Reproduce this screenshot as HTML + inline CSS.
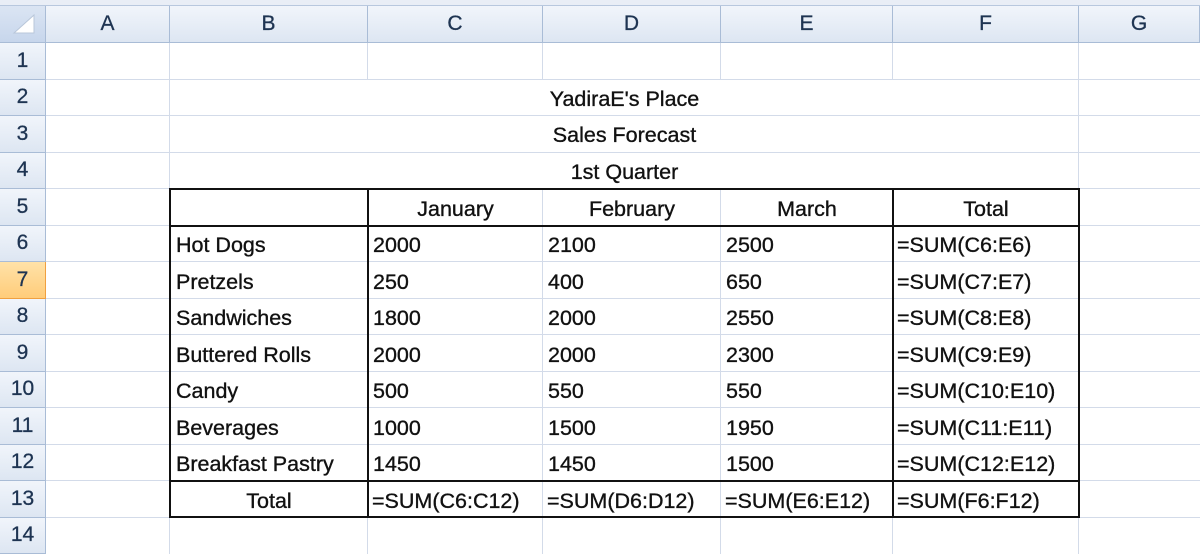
<!DOCTYPE html>
<html><head><meta charset="utf-8"><style>
*{margin:0;padding:0;box-sizing:border-box}
body{width:1200px;height:554px;overflow:hidden;background:#fff;position:relative;font-family:"Liberation Sans",sans-serif;color:#111}
.hd{position:absolute;background:linear-gradient(#f1f5fb,#dde6f2);border-right:1px solid #a9bcd6;border-bottom:1px solid #a9bcd6;color:#1e3452;font-size:21px;display:flex;align-items:center;justify-content:center;-webkit-text-stroke:0.3px #1e3452}
.gv{position:absolute;width:1px;background:#d3dbe9}
.gh{position:absolute;height:1px;background:#d3dbe9}
.bv{position:absolute;width:2px;background:#111}
.bh{position:absolute;height:2px;background:#111}
.t{position:absolute;font-size:21.5px;height:36px;line-height:38px;white-space:nowrap;-webkit-text-stroke:0.35px #111}
.c{text-align:center}
</style></head><body>
<div style="position:absolute;left:0;top:0;width:1200px;height:6px;background:#e9eef6;border-bottom:1px solid #b8c8de"></div>
<div class="hd" style="left:0;top:6px;width:46px;height:37px;background:linear-gradient(#dbe5f3,#c7d6ec)"><svg width="30" height="26"><polygon points="26,4 26,22 6,22" fill="#fff" stroke="#b9c7da"/></svg></div>
<div class="hd" style="left:46px;top:6px;width:124px;height:37px">A</div>
<div class="hd" style="left:170px;top:6px;width:198px;height:37px">B</div>
<div class="hd" style="left:368px;top:6px;width:175px;height:37px">C</div>
<div class="hd" style="left:543px;top:6px;width:178px;height:37px">D</div>
<div class="hd" style="left:721px;top:6px;width:172px;height:37px">E</div>
<div class="hd" style="left:893px;top:6px;width:186px;height:37px">F</div>
<div class="hd" style="left:1079px;top:6px;width:121px;height:37px">G</div>
<div class="hd" style="left:0;top:43px;width:46px;height:36.5px">1</div>
<div class="hd" style="left:0;top:79.5px;width:46px;height:36.5px">2</div>
<div class="hd" style="left:0;top:116px;width:46px;height:36.5px">3</div>
<div class="hd" style="left:0;top:152.5px;width:46px;height:36.5px">4</div>
<div class="hd" style="left:0;top:189px;width:46px;height:36.5px">5</div>
<div class="hd" style="left:0;top:225.5px;width:46px;height:36.5px">6</div>
<div class="hd" style="left:0;top:262px;width:46px;height:36.5px;background:linear-gradient(#ffe2a8,#ffcc7a);border-color:#f0a040">7</div>
<div class="hd" style="left:0;top:298.5px;width:46px;height:36.5px">8</div>
<div class="hd" style="left:0;top:335px;width:46px;height:36.5px">9</div>
<div class="hd" style="left:0;top:371.5px;width:46px;height:36.5px">10</div>
<div class="hd" style="left:0;top:408px;width:46px;height:36.5px">11</div>
<div class="hd" style="left:0;top:444.5px;width:46px;height:36.5px">12</div>
<div class="hd" style="left:0;top:481px;width:46px;height:36.5px">13</div>
<div class="hd" style="left:0;top:517.5px;width:46px;height:36.5px">14</div>
<div class="gh" style="left:46px;width:1154px;top:79px"></div>
<div class="gh" style="left:46px;width:1154px;top:115px"></div>
<div class="gh" style="left:46px;width:1154px;top:152px"></div>
<div class="gh" style="left:46px;width:1154px;top:188px"></div>
<div class="gh" style="left:46px;width:1154px;top:225px"></div>
<div class="gh" style="left:46px;width:1154px;top:261px"></div>
<div class="gh" style="left:46px;width:1154px;top:298px"></div>
<div class="gh" style="left:46px;width:1154px;top:334px"></div>
<div class="gh" style="left:46px;width:1154px;top:371px"></div>
<div class="gh" style="left:46px;width:1154px;top:407px"></div>
<div class="gh" style="left:46px;width:1154px;top:444px"></div>
<div class="gh" style="left:46px;width:1154px;top:480px"></div>
<div class="gh" style="left:46px;width:1154px;top:517px"></div>
<div class="gv" style="left:169px;top:43px;height:511px"></div>
<div class="gv" style="left:1078px;top:43px;height:511px"></div>
<div class="gv" style="left:367px;top:43px;height:36px"></div>
<div class="gv" style="left:542px;top:43px;height:36px"></div>
<div class="gv" style="left:720px;top:43px;height:36px"></div>
<div class="gv" style="left:892px;top:43px;height:36px"></div>
<div class="gv" style="left:367px;top:189px;height:365px"></div>
<div class="gv" style="left:542px;top:189px;height:365px"></div>
<div class="gv" style="left:720px;top:189px;height:365px"></div>
<div class="gv" style="left:892px;top:189px;height:365px"></div>
<div class="bh" style="left:170px;width:910px;top:188px"></div>
<div class="bh" style="left:170px;width:910px;top:225px"></div>
<div class="bh" style="left:170px;width:910px;top:480px"></div>
<div class="bh" style="left:170px;width:910px;top:516px"></div>
<div class="bv" style="left:169px;top:188px;height:330px"></div>
<div class="bv" style="left:367px;top:188px;height:330px"></div>
<div class="bv" style="left:892px;top:188px;height:330px"></div>
<div class="bv" style="left:1078px;top:188px;height:330px"></div>
<div class="t c" style="left:170px;width:909px;top:80px">YadiraE's Place</div>
<div class="t c" style="left:170px;width:909px;top:116px">Sales Forecast</div>
<div class="t c" style="left:170px;width:909px;top:153px">1st Quarter</div>
<div class="t c" style="left:368px;width:175px;top:190px">January</div>
<div class="t c" style="left:543px;width:178px;top:190px">February</div>
<div class="t c" style="left:721px;width:172px;top:190px">March</div>
<div class="t c" style="left:893px;width:186px;top:190px">Total</div>
<div class="t" style="left:176px;top:226px">Hot Dogs</div><div class="t" style="left:373px;top:226px">2000</div><div class="t" style="left:548px;top:226px">2100</div><div class="t" style="left:726px;top:226px">2500</div><div class="t" style="left:897px;top:226px">=SUM(C6:E6)</div>
<div class="t" style="left:176px;top:263px">Pretzels</div><div class="t" style="left:373px;top:263px">250</div><div class="t" style="left:548px;top:263px">400</div><div class="t" style="left:726px;top:263px">650</div><div class="t" style="left:897px;top:263px">=SUM(C7:E7)</div>
<div class="t" style="left:176px;top:299px">Sandwiches</div><div class="t" style="left:373px;top:299px">1800</div><div class="t" style="left:548px;top:299px">2000</div><div class="t" style="left:726px;top:299px">2550</div><div class="t" style="left:897px;top:299px">=SUM(C8:E8)</div>
<div class="t" style="left:176px;top:336px">Buttered Rolls</div><div class="t" style="left:373px;top:336px">2000</div><div class="t" style="left:548px;top:336px">2000</div><div class="t" style="left:726px;top:336px">2300</div><div class="t" style="left:897px;top:336px">=SUM(C9:E9)</div>
<div class="t" style="left:176px;top:372px">Candy</div><div class="t" style="left:373px;top:372px">500</div><div class="t" style="left:548px;top:372px">550</div><div class="t" style="left:726px;top:372px">550</div><div class="t" style="left:897px;top:372px">=SUM(C10:E10)</div>
<div class="t" style="left:176px;top:409px">Beverages</div><div class="t" style="left:373px;top:409px">1000</div><div class="t" style="left:548px;top:409px">1500</div><div class="t" style="left:726px;top:409px">1950</div><div class="t" style="left:897px;top:409px">=SUM(C11:E11)</div>
<div class="t" style="left:176px;top:445px">Breakfast Pastry</div><div class="t" style="left:373px;top:445px">1450</div><div class="t" style="left:548px;top:445px">1450</div><div class="t" style="left:726px;top:445px">1500</div><div class="t" style="left:897px;top:445px">=SUM(C12:E12)</div>
<div class="t c" style="left:170px;width:198px;top:482px">Total</div><div class="t" style="left:372px;top:482px">=SUM(C6:C12)</div><div class="t" style="left:547px;top:482px">=SUM(D6:D12)</div><div class="t" style="left:725px;top:482px">=SUM(E6:E12)</div><div class="t" style="left:897px;top:482px">=SUM(F6:F12)</div>
</body></html>
